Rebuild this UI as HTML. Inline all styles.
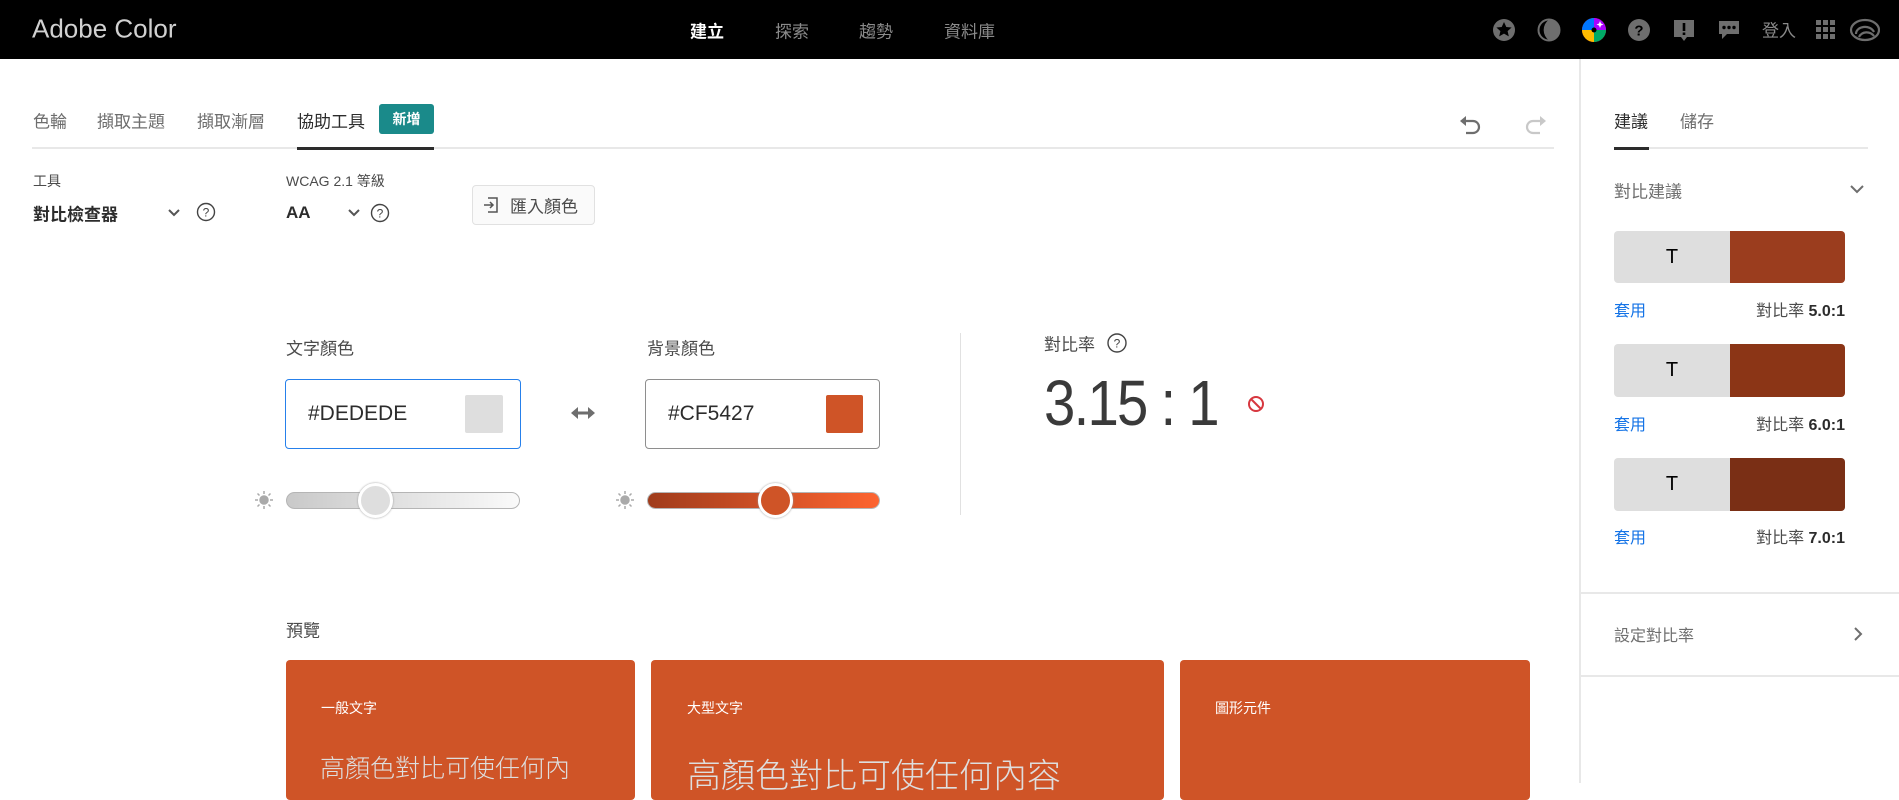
<!DOCTYPE html>
<html><head><meta charset="utf-8"><style>
*{box-sizing:border-box;margin:0;padding:0}
body{width:1899px;height:783px;overflow:hidden;background:#fff;font-family:"Liberation Sans","Noto Sans CJK TC",sans-serif;color:#4b4b4b;position:relative}
.a{position:absolute;white-space:nowrap}
.hdr{position:absolute;left:0;top:0;width:1899px;height:59px;background:#000}
.c{transform:translateY(-50%)}
</style></head><body>
<div class="hdr"></div>
<div class="a c" style="left:32px;top:29px;font-size:26px;color:#d0d0d0;font-weight:300">Adobe Color</div>
<div class="a c" style="left:690px;top:30px;font-size:17px;color:#fff;font-weight:bold">建立</div>
<div class="a c" style="left:775px;top:30px;font-size:17px;color:#8a8a8a">探索</div>
<div class="a c" style="left:859px;top:30px;font-size:17px;color:#8a8a8a">趨勢</div>
<div class="a c" style="left:944px;top:30px;font-size:17px;color:#8a8a8a">資料庫</div>
<svg class="a" style="left:1490px;top:16px" width="390" height="30" viewBox="0 0 390 30">
<circle cx="14" cy="14" r="11" fill="#6e6e6e"/><path d="M14 6l2.3 5 5.3.5-4 3.6 1.2 5.3L14 17.6 9.2 20.4l1.2-5.3-4-3.6 5.3-.5z" fill="#000"/>
<circle cx="59" cy="14" r="10.5" fill="none" stroke="#6e6e6e" stroke-width="2"/><path d="M59 3.5a10.5 10.5 0 0 1 0 21a13 13 0 0 1 0-21z" fill="#6e6e6e"/>
<g><circle cx="104" cy="14" r="12" fill="#e33"/><path d="M104 14L104 2A12 12 0 0 1 116 14Z" fill="#a0f"/><path d="M104 14L116 14A12 12 0 0 1 104 26Z" fill="#0a6"/><path d="M104 14L104 26A12 12 0 0 1 92 14Z" fill="#fb0"/><path d="M104 14L92 14A12 12 0 0 1 104 2Z" fill="#07f"/><circle cx="104" cy="14" r="2.5" fill="#000"/><path d="M110 5l1 2.5 2.5 1-2.5 1-1 2.5-1-2.5-2.5-1 2.5-1z" fill="#fff"/></g>
<circle cx="149" cy="14" r="11" fill="#6e6e6e"/><text x="149" y="19.5" font-size="15" font-weight="bold" text-anchor="middle" fill="#000" font-family="Liberation Sans">?</text>
<path d="M184 4h20v17h-7l-3 4-3-4h-7z" fill="#6e6e6e"/><rect x="192.7" y="7" width="2.6" height="8" fill="#000"/><rect x="192.7" y="16.5" width="2.6" height="2.5" fill="#000"/>
<path d="M229 5h20v13h-12l-5 5v-5h-3z" fill="#6e6e6e"/><circle cx="234" cy="11.5" r="1.7" fill="#000"/><circle cx="239" cy="11.5" r="1.7" fill="#000"/><circle cx="244" cy="11.5" r="1.7" fill="#000"/>
<g fill="#6e6e6e"><rect x="326" y="4" width="5" height="5"/><rect x="333" y="4" width="5" height="5"/><rect x="340" y="4" width="5" height="5"/><rect x="326" y="11" width="5" height="5"/><rect x="333" y="11" width="5" height="5"/><rect x="340" y="11" width="5" height="5"/><rect x="326" y="18" width="5" height="5"/><rect x="333" y="18" width="5" height="5"/><rect x="340" y="18" width="5" height="5"/></g>
<g fill="none" stroke="#6e6e6e" stroke-width="2.2"><ellipse cx="375" cy="14" rx="14" ry="10"/><path d="M366 18c0-8 14-10 18-2M369 21c3-6 11-6 15-1"/></g>
</svg>
<div class="a c" style="left:1762px;top:29px;font-size:17px;color:#8a8a8a">登入</div>

<div class="a c" style="left:33px;top:120px;font-size:17px;color:#6e6e6e">色輪</div>
<div class="a c" style="left:97px;top:120px;font-size:17px;color:#6e6e6e">擷取主題</div>
<div class="a c" style="left:197px;top:120px;font-size:17px;color:#6e6e6e">擷取漸層</div>
<div class="a c" style="left:297px;top:120px;font-size:17px;color:#2c2c2c">協助工具</div>
<div class="a" style="left:379px;top:104px;width:55px;height:30px;background:#1a8a8a;border-radius:3px;color:#fff;font-size:14px;font-weight:bold;text-align:center;line-height:30px">新增</div>
<div class="a" style="left:32px;top:147px;width:1522px;height:2px;background:#e8e8e8"></div>
<div class="a" style="left:297px;top:147px;width:137px;height:3px;background:#2c2c2c"></div>
<svg class="a" style="left:1458px;top:113px" width="90" height="26" viewBox="0 0 90 26">
<path d="M5 8h10a6 6 0 0 1 0 12H8" fill="none" stroke="#6e6e6e" stroke-width="2.2"/><path d="M2 8l6-5v10z" fill="#6e6e6e"/>
<path d="M85 8H75a6 6 0 0 0 0 12h7" fill="none" stroke="#c8c8c8" stroke-width="2.2"/><path d="M88 8l-6-5v10z" fill="#c8c8c8"/>
</svg>

<div class="a c" style="left:33px;top:181px;font-size:14px;color:#4b4b4b">工具</div>
<div class="a c" style="left:33px;top:213px;font-size:17px;color:#2c2c2c;font-weight:bold">對比檢查器</div>
<div class="a c" style="left:286px;top:181px;font-size:14px;color:#4b4b4b">WCAG 2.1 等級</div>
<div class="a c" style="left:286px;top:213px;font-size:17px;color:#2c2c2c;font-weight:bold">AA</div>
<svg class="a" style="left:166px;top:202px" width="230" height="24" viewBox="0 0 230 24">
<path d="M3 8l5 5 5-5" fill="none" stroke="#555" stroke-width="2"/>
<circle cx="40" cy="10" r="8.5" fill="none" stroke="#444" stroke-width="1.4"/><text x="40" y="14.5" font-size="12" text-anchor="middle" fill="#444" font-family="Liberation Sans">?</text>
<path d="M183 8l5 5 5-5" fill="none" stroke="#555" stroke-width="2"/>
<circle cx="214" cy="11" r="8.5" fill="none" stroke="#444" stroke-width="1.4"/><text x="214" y="15.5" font-size="12" text-anchor="middle" fill="#444" font-family="Liberation Sans">?</text>
</svg>
<div class="a" style="left:472px;top:185px;width:123px;height:40px;border:1px solid #e1e1e1;border-radius:4px;background:#fafafa"></div>
<svg class="a" style="left:482px;top:196px" width="18" height="18" viewBox="0 0 18 18"><path d="M6 2h9v14H6M2 9h9M8 6l3 3-3 3" fill="none" stroke="#555" stroke-width="1.5"/></svg>
<div class="a c" style="left:510px;top:205px;font-size:17px;color:#4b4b4b">匯入顏色</div>

<div class="a c" style="left:286px;top:347px;font-size:17px;color:#4b4b4b">文字顏色</div>
<div class="a c" style="left:647px;top:347px;font-size:17px;color:#4b4b4b">背景顏色</div>
<div class="a" style="left:285px;top:379px;width:236px;height:70px;border:1px solid #2680eb;border-radius:4px"></div>
<div class="a c" style="left:308px;top:414px;font-size:21px;color:#2c2c2c">#DEDEDE</div>
<div class="a" style="left:465px;top:395px;width:38px;height:38px;background:#dedede;border-radius:2px"></div>
<div class="a" style="left:645px;top:379px;width:235px;height:70px;border:1px solid #8e8e8e;border-radius:4px"></div>
<div class="a c" style="left:668px;top:414px;font-size:21px;color:#2c2c2c">#CF5427</div>
<div class="a" style="left:826px;top:395px;width:37px;height:38px;background:#cf5427;border-radius:2px"></div>
<svg class="a" style="left:570px;top:405px" width="26" height="16" viewBox="0 0 26 16"><path d="M1 8l7-6v12zM25 8l-7-6v12z" fill="#6e6e6e"/><rect x="7" y="6.5" width="12" height="3" fill="#6e6e6e"/></svg>
<div class="a" style="left:286px;top:492px;width:234px;height:17px;border-radius:9px;background:linear-gradient(90deg,#c9c9c9,#fafafa);border:1px solid #b5b5b5"></div>
<div class="a" style="left:358px;top:483px;width:35px;height:35px;border-radius:50%;background:#dedede;border:3px solid #fff;box-shadow:0 0 2px #999"></div>
<div class="a" style="left:647px;top:492px;width:233px;height:17px;border-radius:9px;background:linear-gradient(90deg,#a03c1c,#fd6430);border:1px solid #b5b5b5"></div>
<div class="a" style="left:758px;top:483px;width:35px;height:35px;border-radius:50%;background:#cf5427;border:3px solid #fff;box-shadow:0 0 2px #999"></div>
<svg class="a" style="left:254px;top:490px" width="400" height="20" viewBox="0 0 400 20"><g fill="#aaa" stroke="#aaa" stroke-width="1.5"><circle cx="10" cy="10" r="4"/><path d="M10 1v3M10 16v3M1 10h3M16 10h3M3.5 3.5l2 2M14.5 14.5l2 2M3.5 16.5l2-2M14.5 5.5l2-2"/><circle cx="371" cy="10" r="4"/><path d="M371 1v3M371 16v3M362 10h3M377 10h3M364.5 3.5l2 2M375.5 14.5l2 2M364.5 16.5l2-2M375.5 5.5l2-2"/></g></svg>

<div class="a" style="left:960px;top:333px;width:1px;height:182px;background:#e1e1e1"></div>
<div class="a c" style="left:1044px;top:343px;font-size:17px;color:#4b4b4b">對比率</div>
<svg class="a" style="left:1106px;top:332px" width="22" height="22" viewBox="0 0 22 22"><circle cx="11" cy="11" r="9" fill="none" stroke="#444" stroke-width="1.4"/><text x="11" y="15.5" font-size="12" text-anchor="middle" fill="#444" font-family="Liberation Sans">?</text></svg>
<div class="a c" style="left:1044px;top:403px;font-size:64px;color:#3a3a3a;letter-spacing:-2px;transform:translateY(-50%) scaleX(0.88);transform-origin:left center">3.15 : 1</div>
<svg class="a" style="left:1247px;top:395px" width="18" height="18" viewBox="0 0 18 18"><circle cx="9" cy="9" r="7" fill="none" stroke="#d7373f" stroke-width="2"/><path d="M4 4l10 10" stroke="#d7373f" stroke-width="2"/></svg>

<div class="a c" style="left:286px;top:629px;font-size:17px;color:#4b4b4b">預覽</div>
<div class="a" style="left:286px;top:660px;width:349px;height:140px;background:#cf5427;border-radius:4px"></div>
<div class="a" style="left:651px;top:660px;width:513px;height:140px;background:#cf5427;border-radius:4px"></div>
<div class="a" style="left:1180px;top:660px;width:350px;height:140px;background:#cf5427;border-radius:4px"></div>
<div class="a c" style="left:321px;top:708px;font-size:14px;color:#fff">一般文字</div>
<div class="a c" style="left:687px;top:708px;font-size:14px;color:#fff">大型文字</div>
<div class="a c" style="left:1215px;top:708px;font-size:14px;color:#fff">圖形元件</div>
<div class="a c" style="left:320px;top:767px;font-size:25px;color:#dedede;font-weight:300">高顏色對比可使任何內</div>
<div class="a c" style="left:687px;top:773px;font-size:34px;color:#dedede;font-weight:300">高顏色對比可使任何內容</div>

<div class="a" style="left:1579px;top:59px;width:2px;height:724px;background:#e8e8e8"></div>
<div class="a c" style="left:1614px;top:120px;font-size:17px;color:#2c2c2c">建議</div>
<div class="a c" style="left:1680px;top:120px;font-size:17px;color:#6e6e6e">儲存</div>
<div class="a" style="left:1614px;top:147px;width:254px;height:2px;background:#e8e8e8"></div>
<div class="a" style="left:1614px;top:147px;width:35px;height:3px;background:#2c2c2c"></div>
<div class="a c" style="left:1614px;top:190px;font-size:17px;color:#6e6e6e">對比建議</div>
<svg class="a" style="left:1849px;top:183px" width="16" height="12" viewBox="0 0 16 12"><path d="M2 3l6 6 6-6" fill="none" stroke="#6e6e6e" stroke-width="2"/></svg>

<div class="a" style="left:1614px;top:231px;width:231px;height:52px;border-radius:4px;overflow:hidden;background:#dedede"><div style="position:absolute;left:116px;top:0;width:115px;height:52px;background:#9b3d1e"></div><div style="position:absolute;left:0;width:116px;text-align:center;line-height:52px;font-size:20px;color:#000">T</div></div>
<div class="a c" style="left:1614px;top:309px;font-size:16px;color:#1473e6">套用</div>
<div class="a c" style="right:54px;top:309px;font-size:16px;color:#4b4b4b">對比率 <b style="color:#2c2c2c">5.0:1</b></div>
<div class="a" style="left:1614px;top:344px;width:231px;height:53px;border-radius:4px;overflow:hidden;background:#dedede"><div style="position:absolute;left:116px;top:0;width:115px;height:53px;background:#8b3516"></div><div style="position:absolute;left:0;width:116px;text-align:center;line-height:53px;font-size:20px;color:#000">T</div></div>
<div class="a c" style="left:1614px;top:423px;font-size:16px;color:#1473e6">套用</div>
<div class="a c" style="right:54px;top:423px;font-size:16px;color:#4b4b4b">對比率 <b style="color:#2c2c2c">6.0:1</b></div>
<div class="a" style="left:1614px;top:458px;width:231px;height:53px;border-radius:4px;overflow:hidden;background:#dedede"><div style="position:absolute;left:116px;top:0;width:115px;height:53px;background:#7a2f15"></div><div style="position:absolute;left:0;width:116px;text-align:center;line-height:53px;font-size:20px;color:#000">T</div></div>
<div class="a c" style="left:1614px;top:536px;font-size:16px;color:#1473e6">套用</div>
<div class="a c" style="right:54px;top:536px;font-size:16px;color:#4b4b4b">對比率 <b style="color:#2c2c2c">7.0:1</b></div>

<div class="a" style="left:1581px;top:592px;width:318px;height:2px;background:#e8e8e8"></div>
<div class="a c" style="left:1614px;top:634px;font-size:16px;color:#6e6e6e">設定對比率</div>
<svg class="a" style="left:1852px;top:626px" width="12" height="16" viewBox="0 0 12 16"><path d="M3 2l6 6-6 6" fill="none" stroke="#6e6e6e" stroke-width="2"/></svg>
<div class="a" style="left:1581px;top:675px;width:318px;height:2px;background:#e8e8e8"></div>
</body></html>
